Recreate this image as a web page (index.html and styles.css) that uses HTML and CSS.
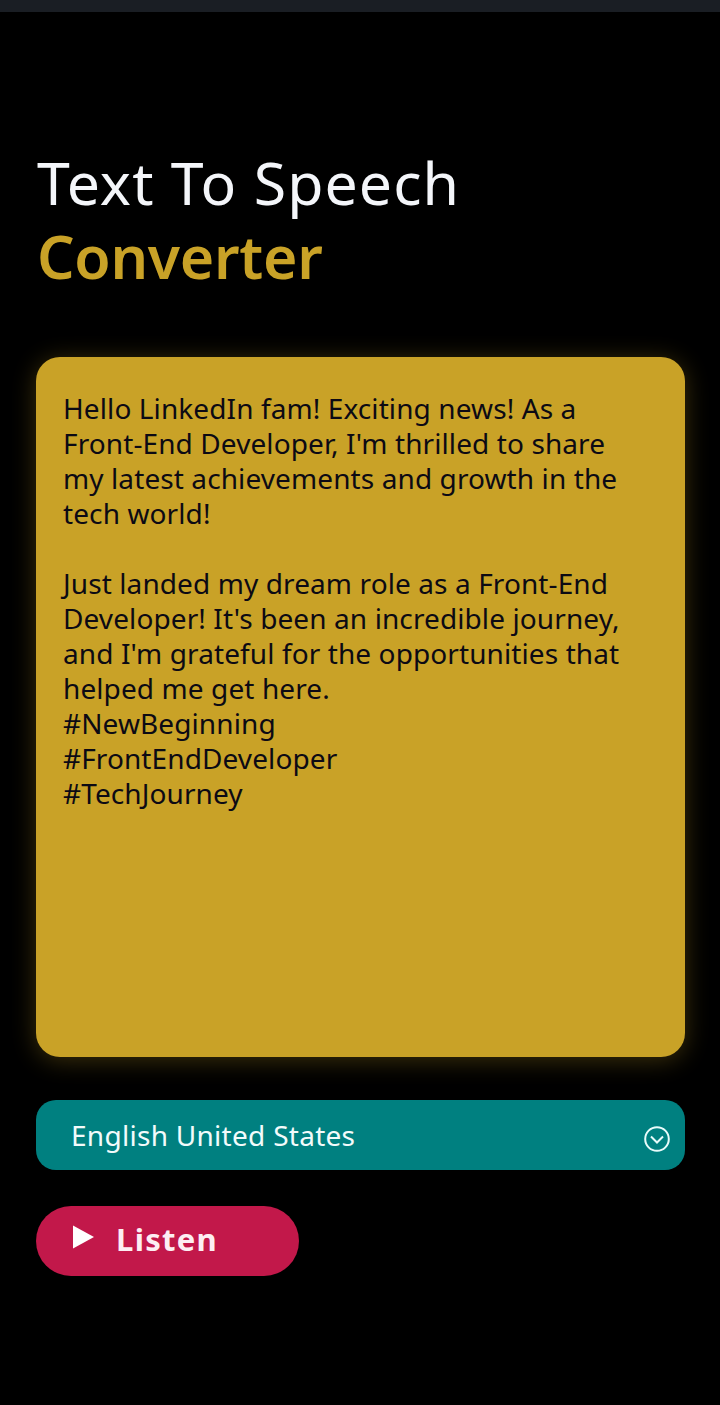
FILE: index.html
```html
<!DOCTYPE html>
<html lang="en">
  <head>
    <meta charset="UTF-8" />
    <meta name="viewport" content="width=device-width, initial-scale=1.0" />
    <title>Text To Speech Converter</title>
    <link rel="stylesheet" href="styles.css">
  </head>
  <body>
    <div class="topbar"></div>
    <div class="container">
      <h1>Text To Speech <span>Converter</span></h1>
      <textarea class="message" spellcheck="false">Hello LinkedIn fam! Exciting news! As a Front-End Developer, I'm thrilled to share my latest achievements and growth in the tech world!

Just landed my dream role as a Front-End Developer! It's been an incredible journey, and I'm grateful for the opportunities that helped me get here.
#NewBeginning
#FrontEndDeveloper
#TechJourney</textarea>
      <div class="voice">
        <select>
          <option>English United States</option>
        </select>
        <svg class="chevron" viewBox="0 0 26 26" aria-hidden="true">
          <circle cx="13" cy="13" r="11.8" />
          <path d="M7 10.5l6 6 6-6" />
        </svg>
      </div>
      <button class="listen">
        <svg class="play" viewBox="0 0 22 24" aria-hidden="true">
          <path d="M0 0l22 12L0 24z" />
        </svg>
        Listen
      </button>
    </div>
  </body>
</html>
```

FILE: styles.css
```css
*,
::before,
::after {
  box-sizing: border-box;
}

body {
  margin: 0;
  font-family: "Noto Sans", "Open Sans", sans-serif;
  background-color: #000;
  color: #fff;
}

.topbar {
  height: 12px;
  background-color: #1a1e24;
}

.container {
  display: flex;
  flex-direction: column;
  align-items: flex-start;
  padding: 133px 35px 0 36px;
}

h1 {
  margin: 0 0 64px 1px;
  width: 500px;
  font-size: 59px;
  font-weight: 400;
  line-height: 74px;
  letter-spacing: 1.05px;
  color: #f4f6fa;
}

h1 span {
  display: block;
  font-weight: 600;
  letter-spacing: -0.3px;
  color: #c9a227;
}

.message {
  display: block;
  width: 100%;
  height: 700px;
  padding: 34px 32px 34px 27px;
  border: none;
  border-radius: 24px;
  outline: none;
  resize: none;
  overflow: hidden;
  font-family: inherit;
  font-size: 28px;
  line-height: 35px;
  letter-spacing: 0.1px;
  color: #0c0a14;
  background-color: #c9a227;
  box-shadow: 0 3px 24px rgba(201, 162, 39, 0.3);
}

.voice {
  position: relative;
  width: 100%;
  margin-top: 43px;
}

.voice select {
  display: block;
  width: 100%;
  height: 70px;
  padding: 0 60px 1px 35px;
  border: none;
  border-radius: 20px;
  outline: none;
  appearance: none;
  font-family: inherit;
  font-size: 28px;
  letter-spacing: 0.28px;
  color: #f2fbfb;
  background-color: #008080;
}

.chevron {
  position: absolute;
  top: 26px;
  right: 15px;
  width: 26px;
  height: 26px;
  fill: none;
  stroke: #e8fbfa;
  stroke-width: 2;
}

.listen {
  display: flex;
  align-items: center;
  gap: 22px;
  width: 263px;
  height: 70px;
  margin-top: 36px;
  padding: 0 0 4px 37px;
  border: none;
  border-radius: 35px;
  font-family: inherit;
  font-size: 31px;
  font-weight: 700;
  letter-spacing: 1.3px;
  color: #fdeef3;
  background-color: #c2184a;
}

.play {
  width: 21px;
  height: 24px;
  margin-top: -4px;
  fill: #fff;
}
```
